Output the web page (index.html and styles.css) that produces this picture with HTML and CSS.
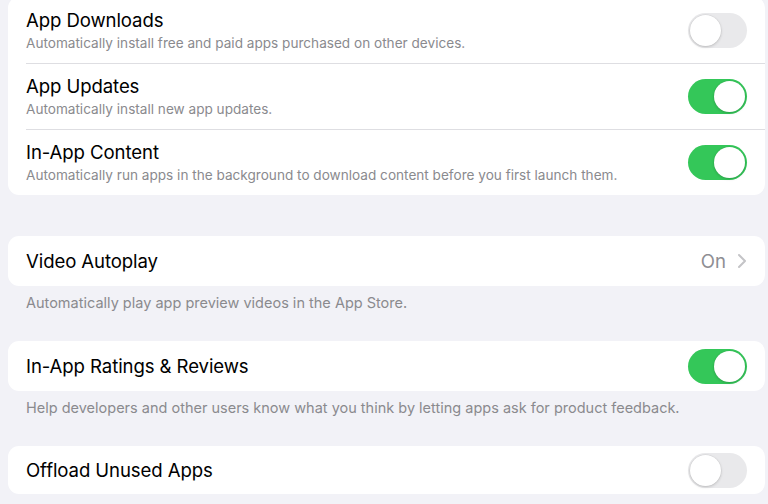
FILE: index.html
```html
<!DOCTYPE html>
<html>
<head>
<meta charset="utf-8">
<link rel="stylesheet" href="styles.css">
</head>
<body>
<div class="page">
  <div class="card first">
    <div class="row tall">
      <div class="texts">
        <div class="title">App Downloads</div>
        <div class="sub">Automatically install free and paid apps purchased on other devices.</div>
      </div>
      <div class="toggle"><div class="knob"></div></div>
    </div>
    <div class="row tall sep">
      <div class="texts">
        <div class="title">App Updates</div>
        <div class="sub">Automatically install new app updates.</div>
      </div>
      <div class="toggle on"><div class="knob"></div></div>
    </div>
    <div class="row tall sep">
      <div class="texts">
        <div class="title">In-App Content</div>
        <div class="sub">Automatically run apps in the background to download content before you first launch them.</div>
      </div>
      <div class="toggle on"><div class="knob"></div></div>
    </div>
  </div>

  <div class="card gap-big">
    <div class="row single">
      <div class="title">Video Autoplay</div>
      <div class="value">On<svg class="chev" width="10" height="16" viewBox="0 0 10 16"><path d="M2 2 L8 8 L2 14" fill="none" stroke="#c4c4c7" stroke-width="2" stroke-linecap="round" stroke-linejoin="round"/></svg></div>
    </div>
  </div>
  <div class="footer">Automatically play app preview videos in the App Store.</div>

  <div class="card">
    <div class="row single">
      <div class="title">In-App Ratings &amp; Reviews</div>
      <div class="toggle on"><div class="knob"></div></div>
    </div>
  </div>
  <div class="footer">Help developers and other users know what you think by letting apps ask for product feedback.</div>

  <div class="card">
    <div class="row single short">
      <div class="title">Offload Unused Apps</div>
      <div class="toggle"><div class="knob"></div></div>
    </div>
  </div>
</div>
</body>
</html>
```

FILE: styles.css
```css
html, body {
  margin: 0;
  padding: 0;
  background: #f2f2f7;
  font-family: Inter, "Noto Sans", "Liberation Sans", sans-serif;
  overflow: hidden;
}
.page {
  display: flex;
  flex-direction: column;
  padding: 0 3px 0 8px;
  width: 757px;
}
.card {
  background: #ffffff;
  border-radius: 11px;
  display: flex;
  flex-direction: column;
}
.card.first {
  margin-top: -3px;
}
.card.gap-big {
  margin-top: 41px;
}
.row {
  display: flex;
  align-items: center;
  justify-content: space-between;
  padding: 0 18px;
  position: relative;
}
.row.tall {
  height: 66px;
}
.row.single {
  height: 50px;
}
.row.single.short {
  height: 48px;
}
.row.sep::before {
  content: "";
  position: absolute;
  left: 18px;
  right: 0;
  top: 0;
  height: 1px;
  background: #dedee2;
}
.texts {
  display: flex;
  flex-direction: column;
  gap: 4px;
}
.title {
  font-size: 18.6px;
  line-height: 22px;
  color: #000;
  letter-spacing: -0.1px;
}
.sub {
  font-size: 13.6px;
  line-height: 16px;
  color: #8a8a8e;
}
.footer {
  font-size: 14.5px;
  line-height: 18px;
  color: #8a8a8e;
  padding: 8px 18px 0;
  height: 55px;
  box-sizing: border-box;
}
.value {
  display: flex;
  align-items: center;
  gap: 11px;
  font-size: 18.6px;
  color: #8e8e93;
}
.chev {
  display: block;
}
.toggle {
  width: 59px;
  height: 35px;
  border-radius: 18px;
  background: #e9e9eb;
  position: relative;
  flex-shrink: 0;
}
.toggle .knob {
  position: absolute;
  top: 2px;
  left: 2px;
  width: 31px;
  height: 31px;
  border-radius: 50%;
  background: #fff;
  box-shadow: 0 1px 3px rgba(0,0,0,0.18), 0 0 0 0.5px rgba(0,0,0,0.06);
}
.toggle.on {
  background: #34c759;
}
.toggle.on .knob {
  left: 26px;
}
```
